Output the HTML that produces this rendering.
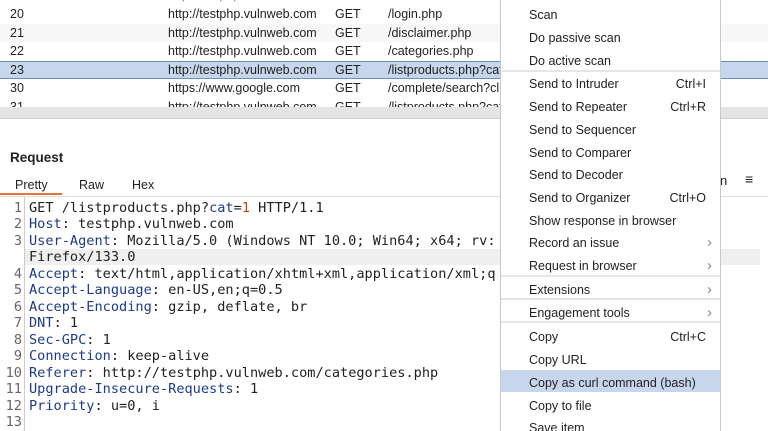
<!DOCTYPE html><html style="overflow:hidden"><head><style>
html,body{overflow:hidden;height:431px}
body{margin:0;width:768px;background:#fff;font-family:"Liberation Sans",sans-serif;font-size:12.5px;color:#222;position:relative}
.a{position:absolute;white-space:nowrap}
.row{position:absolute;left:0;width:768px;height:18px}
.row span{position:absolute;top:2px}
.code{font-family:"DejaVu Sans Mono","Liberation Mono",monospace;font-size:13.6px}
.k{color:#1e3a8a}
.ln{position:absolute;left:0;width:22px;text-align:right;color:#666}
.mi{position:absolute;left:529px}
.sc{position:absolute;right:62px}
.ar{position:absolute;left:707px;color:#888;font-size:15px;margin-top:-2px}
.sep{position:absolute;left:501px;width:219px;height:2px;background:#e6e6e6}
</style></head><body>
<div class="row" style="top:-14px"><span style="left:168px;color:#888">http://testphp.vulnweb.com</span></div>
<div class="row" style="top:5px"><span style="left:10px">20</span><span style="left:168px">http://testphp.vulnweb.com</span><span style="left:335px">GET</span><span style="left:388px">/login.php</span></div>
<div class="row" style="top:24px;background:#f7f7f7"><span style="left:10px">21</span><span style="left:168px">http://testphp.vulnweb.com</span><span style="left:335px">GET</span><span style="left:388px">/disclaimer.php</span></div>
<div class="row" style="top:42px"><span style="left:10px">22</span><span style="left:168px">http://testphp.vulnweb.com</span><span style="left:335px">GET</span><span style="left:388px">/categories.php</span></div>
<div class="row" style="top:61px;background:#c7d6ec;border-top:1px solid #6d8fc0;border-bottom:1px solid #6d8fc0;height:16px"><span style="left:10px;top:1px">23</span><span style="left:168px;top:1px">http://testphp.vulnweb.com</span><span style="left:335px;top:1px">GET</span><span style="left:388px;top:1px">/listproducts.php?cat=1</span></div>
<div class="row" style="top:79px"><span style="left:10px">30</span><span style="left:168px">https://www.google.com</span><span style="left:335px">GET</span><span style="left:388px">/complete/search?client</span></div>
<div class="row" style="top:98px;height:9px;overflow:hidden"><span style="left:10px">31</span><span style="left:168px">http://testphp.vulnweb.com</span><span style="left:335px">GET</span><span style="left:388px">/listproducts.php?cat</span></div>
<div class="a" style="left:0;top:107px;width:768px;height:11px;background:#e4e4e4;border-bottom:1px solid #ccc"></div>
<div class="a" style="left:10px;top:150px;font-weight:bold;font-size:13.5px">Request</div>
<div class="a" style="left:15px;top:178px">Pretty</div><div class="a" style="left:79px;top:178px">Raw</div><div class="a" style="left:132px;top:178px">Hex</div>
<div class="a" style="left:0;top:193px;width:62px;height:2px;background:#e8703a"></div>
<div class="a" style="left:0;top:196px;width:768px;height:1px;background:#ddd"></div>
<div class="a" style="left:720px;top:173px;font-size:13px">n</div><div class="a" style="left:745px;top:171px;font-size:14px">≡</div>
<div class="a" style="left:24px;top:197px;width:1px;height:234px;background:#ccc"></div>
<div class="a" style="left:25px;top:249px;width:735px;height:16px;background:#efefef"></div>
<div class="code">
<div class="a" style="top:200px;left:0;width:600px"><span class="ln">1</span><span style="position:absolute;left:29px">GET /listproducts.php?<span style="color:#1e3a8a">cat</span>=<span style="color:#c2410c">1</span> HTTP/1.1</span></div>
<div class="a" style="top:216px;left:0"><span class="ln">2</span><span style="position:absolute;left:29px"><span class="k">Host</span>: testphp.vulnweb.com</span></div>
<div class="a" style="top:233px;left:0"><span class="ln">3</span><span style="position:absolute;left:29px"><span class="k">User-Agent</span>: Mozilla/5.0 (Windows NT 10.0; Win64; x64; rv:</span></div>
<div class="a" style="top:249px;left:29px">Firefox/133.0</div>
<div class="a" style="top:266px;left:0"><span class="ln">4</span><span style="position:absolute;left:29px"><span class="k">Accept</span>: text/html,application/xhtml+xml,application/xml;q</span></div>
<div class="a" style="top:282px;left:0"><span class="ln">5</span><span style="position:absolute;left:29px"><span class="k">Accept-Language</span>: en-US,en;q=0.5</span></div>
<div class="a" style="top:299px;left:0"><span class="ln">6</span><span style="position:absolute;left:29px"><span class="k">Accept-Encoding</span>: gzip, deflate, br</span></div>
<div class="a" style="top:315px;left:0"><span class="ln">7</span><span style="position:absolute;left:29px"><span class="k">DNT</span>: 1</span></div>
<div class="a" style="top:332px;left:0"><span class="ln">8</span><span style="position:absolute;left:29px"><span class="k">Sec-GPC</span>: 1</span></div>
<div class="a" style="top:348px;left:0"><span class="ln">9</span><span style="position:absolute;left:29px"><span class="k">Connection</span>: keep-alive</span></div>
<div class="a" style="top:365px;left:0"><span class="ln">10</span><span style="position:absolute;left:29px"><span class="k">Referer</span>: http://testphp.vulnweb.com/categories.php</span></div>
<div class="a" style="top:381px;left:0"><span class="ln">11</span><span style="position:absolute;left:29px"><span class="k">Upgrade-Insecure-Requests</span>: 1</span></div>
<div class="a" style="top:398px;left:0"><span class="ln">12</span><span style="position:absolute;left:29px"><span class="k">Priority</span>: u=0, i</span></div>
<div class="a" style="top:414px;left:0"><span class="ln">13</span></div>
</div>
<div class="a" style="left:500px;top:-1px;width:219px;height:436px;background:#fff;border:1px solid #c8c8c8"></div>
<div class="a" style="left:501px;top:370px;width:219px;height:22px;background:#c7d6ec"></div>
<div class="sep" style="top:70px"></div><div class="sep" style="top:275px"></div><div class="sep" style="top:298px"></div><div class="sep" style="top:321px"></div>
<div class="mi" style="top:8px">Scan</div>
<div class="mi" style="top:31px">Do passive scan</div>
<div class="mi" style="top:54px">Do active scan</div>
<div class="mi" style="top:77px">Send to Intruder</div><div class="sc" style="top:77px">Ctrl+I</div>
<div class="mi" style="top:100px">Send to Repeater</div><div class="sc" style="top:100px">Ctrl+R</div>
<div class="mi" style="top:123px">Send to Sequencer</div>
<div class="mi" style="top:146px">Send to Comparer</div>
<div class="mi" style="top:168px">Send to Decoder</div>
<div class="mi" style="top:191px">Send to Organizer</div><div class="sc" style="top:191px">Ctrl+O</div>
<div class="mi" style="top:214px">Show response in browser</div>
<div class="mi" style="top:236px">Record an issue</div><div class="ar" style="top:236px">›</div>
<div class="mi" style="top:259px">Request in browser</div><div class="ar" style="top:259px">›</div>
<div class="mi" style="top:283px">Extensions</div><div class="ar" style="top:283px">›</div>
<div class="mi" style="top:306px">Engagement tools</div><div class="ar" style="top:306px">›</div>
<div class="mi" style="top:330px">Copy</div><div class="sc" style="top:330px">Ctrl+C</div>
<div class="mi" style="top:353px">Copy URL</div>
<div class="mi" style="top:376px">Copy as curl command (bash)</div>
<div class="mi" style="top:399px">Copy to file</div>
<div class="mi" style="top:421px">Save item</div>
</body></html>
